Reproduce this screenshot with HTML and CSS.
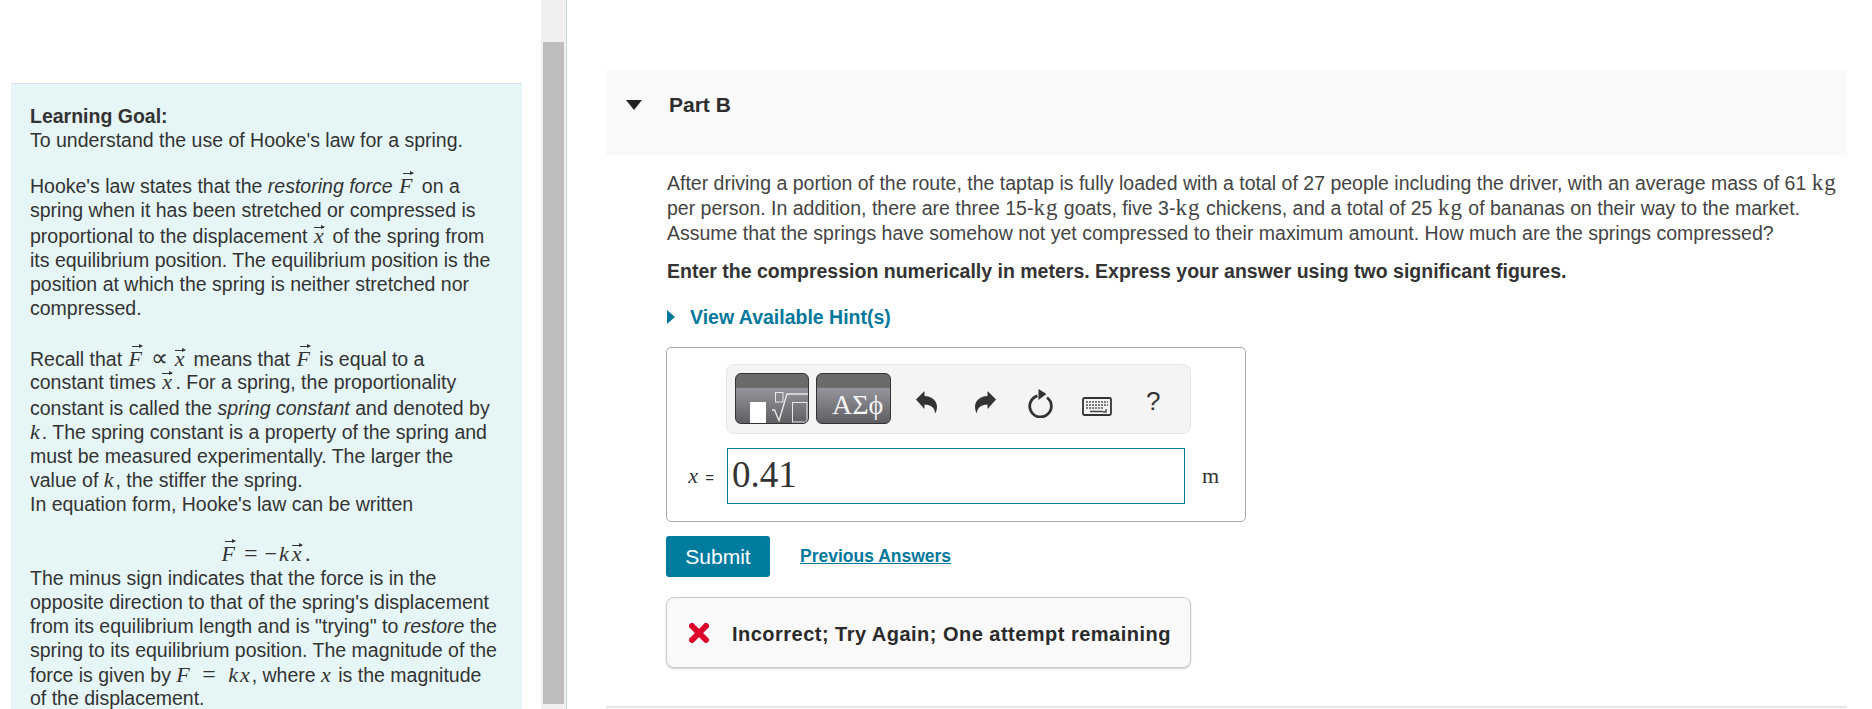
FILE: index.html
```html
<!DOCTYPE html>
<html lang="en">
<head>
<meta charset="utf-8">
<title>Part B</title>
<link rel="stylesheet" href="styles.css">
</head>
<body>
<div class="page">
  <aside class="intro">
    <div class="goal">
      <p class="para">
        <span class="ln"><strong>Learning Goal:</strong></span>
        <span class="ln">To understand the use of Hooke's law for a spring.</span>
      </p>
      <p class="para gap-a">
        <span class="ln">Hooke's law states that the <em>restoring force</em> <span class="m vec">F</span> on a</span>
        <span class="ln">spring when it has been stretched or compressed is</span>
        <span class="ln tall">proportional to the displacement <span class="m vec vx">x</span> of the spring from</span>
        <span class="ln">its equilibrium position. The equilibrium position is the</span>
        <span class="ln">position at which the spring is neither stretched nor</span>
        <span class="ln">compressed.</span>
      </p>
      <p class="para gap-b">
        <span class="ln">Recall that <span class="m vec">F</span> <span class="m up prop">∝</span> <span class="m vec vx">x</span> means that <span class="m vec">F</span> is equal to a</span>
        <span class="ln">constant times <span class="m vec vx">x</span>. For a spring, the proportionality</span>
        <span class="ln tall">constant is called the <em>spring constant</em> and denoted by</span>
        <span class="ln"><span class="m">k</span>. The spring constant is a property of the spring and</span>
        <span class="ln">must be measured experimentally. The larger the</span>
        <span class="ln">value of <span class="m">k</span>, the stiffer the spring.</span>
        <span class="ln">In equation form, Hooke's law can be written</span>
      </p>
      <p class="formula"><span class="m vec">F</span><span class="m up rel">=</span><span class="m up">−</span><span class="m">k</span><span class="m vec vx">x</span><span class="m up">.</span></p>
      <p class="para after">
        <span class="ln">The minus sign indicates that the force is in the</span>
        <span class="ln">opposite direction to that of the spring's displacement</span>
        <span class="ln">from its equilibrium length and is "trying" to <em>restore</em> the</span>
        <span class="ln">spring to its equilibrium position. The magnitude of the</span>
        <span class="ln">force is given by <span class="m">F</span> <span class="m up rel">=</span> <span class="m">kx</span>, where <span class="m">x</span> is the magnitude</span>
        <span class="ln">of the displacement.</span>
      </p>
    </div>
  </aside>
  <div class="scrollbar"><div class="thumb"></div></div>
  <main class="part">
    <header class="part-head">
      <span class="caret-down"></span>
      <h2 class="part-title">Part B</h2>
    </header>
    <div class="part-body">
      <p class="prompt">After driving a portion of the route, the taptap is fully loaded with a total of 27 people including the driver, with an average mass of 61 <span class="unit">kg</span><br>per person. In addition, there are three 15-<span class="unit">kg</span> goats, five 3-<span class="unit">kg</span> chickens, and a total of 25 <span class="unit">kg</span> of bananas on their way to the market.<br>Assume that the springs have somehow not yet compressed to their maximum amount. How much are the springs compressed?</p>
      <p class="instruction">Enter the compression numerically in meters. Express your answer using two significant figures.</p>
      <div class="hint"><span class="caret-right"></span><a class="hint-link">View Available Hint(s)</a></div>
      <section class="answer">
        <div class="toolbar">
          <div class="tpl-btn tpl-a">
            <svg class="tpl-svg" width="74" height="51" viewBox="0 0 74 51">
              <rect x="15" y="29" width="16" height="22" fill="#fff"/>
              <rect x="40.500" y="19.500" width="7.500" height="9.500" fill="none" stroke="#e8e8e8"/>
              <path d="M37 37h2.500l4.500 10.500 8-26.500h21" fill="none" stroke="#e8e8e8" stroke-width="1.400"/>
              <rect x="57.500" y="29.500" width="14.500" height="19.500" fill="none" stroke="#e8e8e8"/>
            </svg>
          </div>
          <div class="tpl-btn tpl-b"><span class="greek">ΑΣϕ</span></div>
          <div class="tools">
            <svg class="ico" width="22" height="24" viewBox="0 0 22 24"><path d="M0 9.500 8.500 1v5C15 6 21 10 21 17c0 3-1 5-2 6.500C19 18 15 14.500 8.500 14.500V19z" fill="#333"/></svg>
            <svg class="ico" width="22" height="24" viewBox="0 0 22 24"><path d="M22 9.500 13.500 1v5C7 6 1 10 1 17c0 3 1 5 2 6.500C3 18 7 14.500 13.500 14.500V19z" fill="#333"/></svg>
            <svg class="ico" width="26" height="29" viewBox="0 0 26 29"><path d="M10.500 6.800A10.800 10.800 0 1 0 20 8.500" fill="none" stroke="#333" stroke-width="2.800"/><path d="M11.500 0 19.500 5 11.500 11z" fill="#333"/></svg>
            <svg class="ico" width="30" height="19" viewBox="0 0 30 19"><rect x="1" y="1" width="28" height="17" rx="1.500" fill="#f4f4f4" stroke="#333" stroke-width="1.800"/><path d="M4 5h22M4 8h22M4 11h18" stroke="#555" stroke-width="1.500" stroke-dasharray="2 1"/><path d="M8 14.500h13M24 12v3h-3" fill="none" stroke="#444" stroke-width="1.300"/></svg>
            <span class="help">?</span>
          </div>
        </div>
        <div class="answer-row">
          <span class="var"><span class="m-small">x</span> =</span>
          <div class="field">0.41</div>
          <span class="units">m</span>
        </div>
      </section>
      <div class="actions">
        <button class="submit" type="button">Submit</button>
        <a class="prev">Previous Answers</a>
      </div>
      <div class="feedback">
        <svg class="cross" width="20" height="20" viewBox="0 0 20 20"><path d="M3 3l14 14M17 3 3 17" stroke="#dc002b" stroke-width="6" stroke-linecap="round"/></svg>
        <span class="feedback-text">Incorrect; Try Again; One attempt remaining</span>
      </div>
    </div>
    <div class="part-rule"></div>
  </main>
</div>
</body>
</html>
```

FILE: styles.css
```css
* { box-sizing: border-box; }
html, body { margin: 0; height: 709px; overflow: hidden; background: #fff; }
body { font-family: "Liberation Sans", Arial, sans-serif; color: #333; }
.page { display: flex; height: 709px; }
.intro { width: 541px; flex: none; padding: 83px 19px 0 11px; }
.goal { height: 626px; overflow: hidden; background: #e6f6f7; border-top: 1px solid #dde; padding: 20px 0 0 19px; font-size: 19.500px; line-height: 24px; white-space: nowrap; }
.para { margin: 0; }
.gap-a { margin-top: 22px; }
.gap-b { margin-top: 26px; }
.after { margin-top: 1px; }
.ln { display: block; height: 24px; }
.tall { margin-top: 2px; }
.m { font-family: "Liberation Serif", serif; font-style: italic; font-size: 22px; letter-spacing: 2px; }
.up { font-style: normal; }
.rel { font-size: 24px; margin: 0 5px; }
.prop { font-size: 24px; letter-spacing: 0; }
.vec { position: relative; display: inline-block; line-height: 20px; margin: 0 3px 0 1px; letter-spacing: 1px; }
.vec::before { content: ""; position: absolute; left: 25%; top: -3px; width: 10px; height: 1px; background: #333; }
.vec::after { content: ""; position: absolute; left: calc(25% + 7px); top: -5px; border-left: 4px solid #333; border-top: 2.500px solid transparent; border-bottom: 2.500px solid transparent; }
.vx { letter-spacing: 0.500px; }
.vx::before { left: 0; top: 1px; }
.vx::after { left: 7px; top: -1px; }
.formula { margin: 25px 0 0; text-align: center; height: 24px; line-height: 24px; padding-right: 19px; }
.scrollbar { width: 25px; flex: none; background: #f0f0f0; padding: 42px 2px 5px; }
.thumb { height: 662px; background: #bdbdbd; }
.part { flex: none; width: 1305px; border-left: 1px solid #c9d6e2; padding: 70px 0 0 39px; }
.part-head { width: 1241px; height: 85px; background: #f9f9f9; display: flex; padding: 23px 0 0 20px; }
.caret-down { width: 0; height: 0; margin-top: 7px; border-left: 8.500px solid transparent; border-right: 8.500px solid transparent; border-top: 10px solid #222; }
.part-title { margin: 0 0 0 27px; font-size: 21px; line-height: 24px; font-weight: bold; color: #2d2d2d; }
.part-body { padding: 16px 0 0 61px; }
.prompt { margin: 0; font-size: 19.500px; line-height: 25px; white-space: nowrap; color: #444; }
.unit { font-family: "Liberation Serif", serif; font-size: 23px; letter-spacing: 1px; line-height: 20px; }
.instruction { margin: 13px 0 0; font-size: 19.500px; line-height: 25px; font-weight: bold; color: #333; }
.hint { display: flex; align-items: center; margin-top: 21px; height: 24px; }
.caret-right { width: 0; height: 0; border-left: 8px solid #00789b; border-top: 7.500px solid transparent; border-bottom: 7.500px solid transparent; }
.hint-link { margin-left: 15px; font-size: 19.500px; font-weight: bold; color: #00789b; }
.answer { margin: 18px 0 0 -1px; width: 580px; height: 175px; border: 1px solid #aaa; border-radius: 5px; padding: 16px 0 0 59px; }
.toolbar { width: 465px; height: 70px; background: #f4f4f4; border: 1px solid #e6e6e6; border-radius: 8px; display: flex; padding: 8px 0 0 8px; }
.tpl-btn { height: 51px; border-radius: 6px; border: 1px solid #333; background: linear-gradient(#6b6b6b 0, #6b6b6b 14px, #96959c 14px, #5f5f62 100%); overflow: hidden; }
.tpl-a { width: 74px; }
.tpl-svg { display: block; margin: -1px; }
.tpl-b { width: 75px; margin-left: 7px; padding: 15px 0 0 15px; }
.greek { font-family: "Liberation Serif", serif; font-size: 28px; line-height: 32px; color: #f4f4f4; display: block; }
.tools { width: 295px; height: 50px; display: flex; align-items: center; position: relative; }
.ico { position: absolute; }
.ico:nth-child(1) { left: 25px; top: 17px; }
.ico:nth-child(2) { left: 83px; top: 17px; }
.ico:nth-child(3) { left: 136px; top: 16px; }
.ico:nth-child(4) { left: 191px; top: 24px; }
.help { position: absolute; left: 255px; top: 13px; font-size: 26px; line-height: 30px; color: #333; }
.answer-row { display: flex; align-items: center; margin: 13px 0 0 -59px; height: 57px; }
.var { width: 60px; text-align: right; padding-right: 13px; font-size: 15px; color: #333; flex: none; }
.m-small { font-family: "Liberation Serif", serif; font-style: italic; font-size: 22px; margin-right: 3px; }
.field { width: 458px; height: 56px; border: 1px solid #007a9c; font-family: "Liberation Serif", serif; font-size: 37px; line-height: 52px; padding-left: 4px; color: #333; flex: none; }
.units { margin-left: 17px; font-family: "Liberation Serif", serif; font-size: 22px; color: #333; }
.actions { display: flex; align-items: center; margin: 14px 0 0 -1px; }
.submit { width: 104px; height: 41px; border: 0; border-radius: 3px; background: #007c9f; color: #fff; font-family: "Liberation Sans", Arial, sans-serif; font-size: 21px; padding: 0; }
.prev { margin-left: 30px; font-size: 17.500px; font-weight: bold; color: #00789b; text-decoration: underline; }
.feedback { margin: 20px 0 0 -1px; width: 525px; height: 71px; background: #f9f9f9; border: 1px solid #ccc; border-radius: 8px; box-shadow: 0 1px 2px rgba(0,0,0,0.200); display: flex; align-items: center; padding: 3px 0 0 22px; }
.cross { flex: none; margin-top: -3px; }
.feedback-text { margin-left: 23px; font-size: 20px; font-weight: bold; color: #2a2a2a; letter-spacing: 0.480px; white-space: nowrap; }
.part-rule { width: 1241px; height: 2px; margin-top: 38px; background: #e6e6e6; }
```
